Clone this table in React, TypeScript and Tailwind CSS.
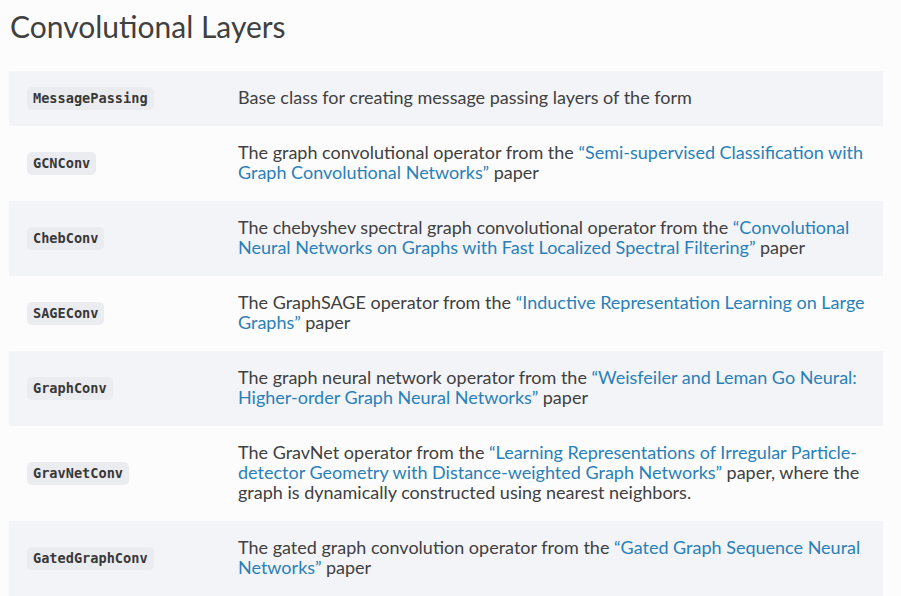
import React from "react";

type Row = { name: string; parts: (string | { link: string })[] };

const rows: Row[] = [
  { name: "MessagePassing", parts: ["Base class for creating message passing layers of the form"] },
  {
    name: "GCNConv",
    parts: ["The graph convolutional operator from the ", { link: "“Semi-supervised Classification with Graph Convolutional Networks”" }, " paper"],
  },
  {
    name: "ChebConv",
    parts: ["The chebyshev spectral graph convolutional operator from the ", { link: "“Convolutional Neural Networks on Graphs with Fast Localized Spectral Filtering”" }, " paper"],
  },
  {
    name: "SAGEConv",
    parts: ["The GraphSAGE operator from the ", { link: "“Inductive Representation Learning on Large Graphs”" }, " paper"],
  },
  {
    name: "GraphConv",
    parts: ["The graph neural network operator from the ", { link: "“Weisfeiler and Leman Go Neural: Higher-order Graph Neural Networks”" }, " paper"],
  },
  {
    name: "GravNetConv",
    parts: [
      "The GravNet operator from the ",
      { link: "“Learning Representations of Irregular Particle-detector Geometry with Distance-weighted Graph Networks”" },
      " paper, where the graph is dynamically constructed using nearest neighbors.",
    ],
  },
  {
    name: "GatedGraphConv",
    parts: ["The gated graph convolution operator from the ", { link: "“Gated Graph Sequence Neural Networks”" }, " paper"],
  },
];

export default function App() {
  return (
    <div
      className="w-[901px] h-[596px] overflow-hidden bg-[#fcfcfc] text-[#404040]"
      style={{ fontFamily: "Lato, 'Noto Sans', sans-serif" }}
    >
      <h1 className="pl-[10px] pt-[8px] text-[30px] leading-[36px] font-normal">Convolutional Layers</h1>
      <div className="ml-[9px] mt-[27px] w-[874px] flex flex-col">
        {rows.map((r, i) => (
          <div key={r.name} className={`flex items-center py-[16px] ${i % 2 === 0 ? "bg-[#f3f4f7]" : "bg-[#fcfcfc]"}`}>
            <div className="w-[229px] shrink-0 pl-[18px] flex">
              <code
                className="rounded-[5px] bg-[#ebecef] px-[6px] py-[3px] text-[13.6px] leading-[17px] font-bold text-[#383838]"
                style={{ fontFamily: "'DejaVu Sans Mono', monospace" }}
              >
                {r.name}
              </code>
            </div>
            <div className="w-[627px] pt-0 pb-[3px] text-[18px] leading-[20px]">
              {r.parts.map((p, j) =>
                typeof p === "string" ? (
                  <span key={j}>{p}</span>
                ) : (
                  <a key={j} className="text-[#2980b9]">
                    {p.link}
                  </a>
                )
              )}
            </div>
          </div>
        ))}
      </div>
    </div>
  );
}
